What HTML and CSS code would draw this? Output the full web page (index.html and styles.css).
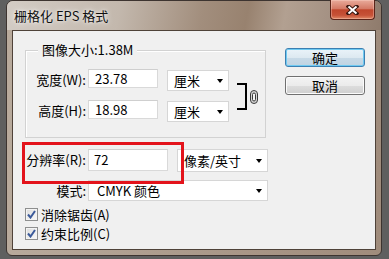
FILE: index.html
```html
<!DOCTYPE html>
<html lang="zh-CN">
<head>
  <meta charset="UTF-8">
  <title>栅格化 EPS 格式</title>
  <link rel="stylesheet" href="styles.css">
</head>
<body>

  <div class="window">
    <div class="titlebar">
      <span class="title">栅格化 EPS 格式</span>
      <div class="close">
        <svg width="13" height="10" viewBox="0 0 13 10">
          <path d="M2.5 1.5 L10.5 8.5 M10.5 1.5 L2.5 8.5" stroke="#3b1810" stroke-width="4" stroke-linecap="square"/>
          <path d="M2.5 1.5 L10.5 8.5 M10.5 1.5 L2.5 8.5" stroke="#fff" stroke-width="2"/>
        </svg>
      </div>
    </div>

    <div class="client">
      <div class="form">
        <div class="group">
          <div class="group-title">图像大小:1.38M</div>
          <div class="size-body">
            <div class="size-rows">
              <div class="row">
                <span class="label group-label">宽度(W):</span>
                <div class="field size-field">23.78</div>
                <div class="select unit-select"><span>厘米</span><i class="arrow"></i></div>
              </div>
              <div class="row">
                <span class="label group-label">高度(H):</span>
                <div class="field size-field">18.98</div>
                <div class="select unit-select"><span>厘米</span><i class="arrow"></i></div>
              </div>
            </div>
            <div class="bracket"></div>
            <svg class="chain" width="8" height="14" viewBox="0 0 8 14">
              <rect x="0.5" y="0.5" width="7" height="13" rx="3.5" fill="#d6d6d6" stroke="#3a3a3a"/>
              <rect x="2.5" y="3" width="3" height="8" rx="1.5" fill="#f4f4f4" stroke="#3a3a3a"/>
            </svg>
          </div>
        </div>

        <div class="row res-row">
          <span class="label">分辨率(R):</span>
          <div class="field res-field">72</div>
          <div class="select res-select"><span>像素/英寸</span><i class="arrow"></i></div>
        </div>

        <div class="row mode-row">
          <span class="label">模式:</span>
          <div class="select mode-select"><span>CMYK 颜色</span><i class="arrow"></i></div>
        </div>

        <div class="check">
          <span class="box">
            <svg width="9" height="9" viewBox="0 0 9 9"><path d="M1 4.5 L3.5 7.5 L8 1" fill="none" stroke="#3b5a9a" stroke-width="2"/></svg>
          </span>
          <span>消除锯齿(A)</span>
        </div>
        <div class="check">
          <span class="box">
            <svg width="9" height="9" viewBox="0 0 9 9"><path d="M1 4.5 L3.5 7.5 L8 1" fill="none" stroke="#3b5a9a" stroke-width="2"/></svg>
          </span>
          <span>约束比例(C)</span>
        </div>
      </div>

      <div class="buttons">
        <button class="btn btn-default">确定</button>
        <button class="btn">取消</button>
      </div>

      <div class="highlight"></div>
    </div>
  </div>

</body>
</html>
```

FILE: styles.css
```css
body {
  margin: 0;
  background: #5f5f5f;
  font-family: "Noto Sans CJK SC", sans-serif;
  font-size: 13px;
  color: #000;
  overflow: hidden;
}

.window {
  box-sizing: border-box;
  width: 376px;
  height: 256px;
  margin-left: 6px;
  border: 1px solid #3d3430;
  border-radius: 7px 7px 6px 6px;
  background: linear-gradient(90deg, #b8aa9c 0%, #ab9a8b 50%, #a08c7c 100%);
  display: flex;
  flex-direction: column;
}

.titlebar {
  height: 29px;
  display: flex;
  align-items: flex-start;
  padding-left: 7px;
  border-radius: 6px 6px 0 0;
  background: linear-gradient(100deg, #d3ccc5 0%, #c3b8ad 30%, #a28e7d 52%, #98826f 64%, #b2a091 74%, #a49183 86%, #8f7b6c 100%);
}

.title {
  line-height: 29px;
  color: #111;
  text-shadow: 0 0 6px rgba(255, 255, 255, 0.9), 0 0 3px rgba(255, 255, 255, 0.7);
}

.close {
  box-sizing: border-box;
  width: 45px;
  height: 20px;
  margin: -1px 6px 0 auto;
  border: 1px solid #5a2419;
  border-top: none;
  border-radius: 0 0 4px 4px;
  background: linear-gradient(#e9ab9b 0%, #d47a66 45%, #c0462c 52%, #c65237 80%, #e08866 100%);
  box-shadow: inset 0 0 0 1px rgba(255, 220, 210, 0.35);
  display: flex;
  align-items: center;
  justify-content: center;
}

.client {
  position: relative;
  flex: 1;
  margin: 0 5px 5px 5px;
  border: 1px solid #4f4239;
  background: #f0f0f0;
  display: flex;
}

.form {
  width: 243px;
  padding: 19px 0 0 12px;
}

.group {
  box-sizing: border-box;
  width: 241px;
  height: 88px;
  border: 1px solid #d2d2d2;
  box-shadow: inset 1px 1px 0 #fff;
}

.group-title {
  width: fit-content;
  margin: -9px 0 0 12px;
  padding: 0 4px;
  line-height: 16px;
  background: #f0f0f0;
}

.size-body {
  display: flex;
  align-items: flex-start;
  margin-top: 11px;
}

.size-rows {
  display: flex;
  flex-direction: column;
  gap: 9px;
}

.row {
  display: flex;
  align-items: flex-start;
}

.label {
  width: 61px;
  text-align: right;
  line-height: 21px;
  white-space: nowrap;
}

.group-label {
  width: 60px;
}

.field {
  box-sizing: border-box;
  margin-left: 2px;
  padding-left: 6px;
  background: #fff;
  border: 1px solid #d9d9d9;
  border-top-color: #cfcfcf;
}

.size-field {
  width: 70px;
  height: 19px;
  line-height: 17px;
}

.select {
  box-sizing: border-box;
  display: flex;
  align-items: center;
  justify-content: space-between;
  padding: 0 5px 0 6px;
  background: #fff;
  border: 1px solid #d6d6d6;
}

.unit-select {
  width: 62px;
  height: 21px;
  margin: 1px 0 0 9px;
}

.arrow {
  width: 0;
  height: 0;
  border-left: 3.5px solid transparent;
  border-right: 3.5px solid transparent;
  border-top: 4px solid #000;
}

.bracket {
  box-sizing: border-box;
  width: 10px;
  height: 27px;
  margin: 14px 0 0 8px;
  border: 2px solid #000;
  border-left: none;
}

.chain {
  margin: 21px 0 0 3px;
}

.res-row {
  margin-top: 11px;
}

.res-field {
  width: 80px;
  height: 22px;
  line-height: 20px;
  padding-left: 5px;
}

.res-row .label {
  line-height: 22px;
}

.res-select {
  width: 91px;
  height: 23px;
  margin-left: 9px;
}

.mode-row {
  margin-top: 8px;
}

.mode-select {
  width: 180px;
  height: 21px;
  margin-left: 2px;
  padding-left: 8px;
}

.check {
  display: flex;
  align-items: center;
  gap: 3px;
  height: 17px;
  margin-top: 2px;
}

.mode-row + .check {
  margin-top: 5px;
}

.box {
  box-sizing: border-box;
  width: 13px;
  height: 13px;
  border: 1px solid #8e8f8f;
  background: linear-gradient(135deg, #dcdcdc, #fafafa);
  box-shadow: inset 0 0 0 1px #f4f4f4;
  display: flex;
  align-items: center;
  justify-content: center;
}

.buttons {
  display: flex;
  flex-direction: column;
  gap: 9px;
  margin-left: 17px;
  padding-top: 17px;
}

.btn {
  box-sizing: border-box;
  width: 80px;
  height: 19px;
  padding: 0;
  font: inherit;
  line-height: 17px;
  color: #000;
  border: 1px solid #707070;
  border-radius: 3px;
  background: linear-gradient(#f3f3f3 0%, #ebebeb 50%, #dddddd 51%, #cfcfcf 100%);
  box-shadow: inset 0 0 0 1px #fbfbfb;
}

.btn-default {
  border-color: #3c7fb1;
  background: linear-gradient(#eaf3f9 0%, #dde9f1 50%, #c8dae7 51%, #bfd3e2 100%);
  box-shadow: inset 0 0 0 1px #6fcaf2;
}

.highlight {
  position: absolute;
  left: 9px;
  top: 111px;
  width: 156px;
  height: 36px;
  border: 3px solid #e3131b;
}
```
